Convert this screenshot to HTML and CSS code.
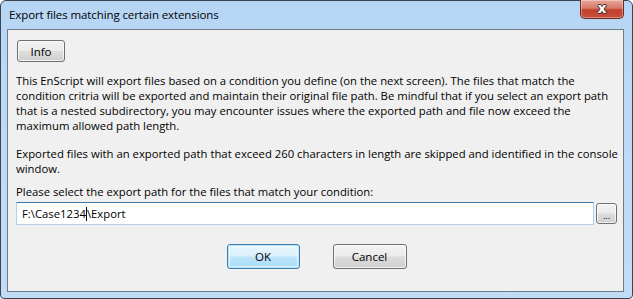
FILE: index.html
```html
<!DOCTYPE html>
<html lang="en">
  <head>
    <meta charset="UTF-8" />
    <title>Export files matching certain extensions</title>
    <link rel="stylesheet" href="styles.css">
  </head>
  <body>
    <div class="window">
      <div class="title-bar">
        <span class="title-text">Export files matching certain extensions</span>
        <div class="close-button"><span>x</span></div>
      </div>
      <div class="client">
        <button class="win-button info-button">Info</button>
        <p class="message">This EnScript will export files based on a condition you define (on the next screen). The files that match the<br>condition critria will be exported and maintain their original file path. Be mindful that if you select an export path<br>that is a nested subdirectory, you may encounter issues where the exported path and file now exceed the<br>maximum allowed path length.</p>
        <p class="message">Exported files with an exported path that exceed 260 characters in length are skipped and identified in the console<br>window.</p>
        <div class="path-label">Please select the export path for the files that match your condition:</div>
        <div class="path-row">
          <div class="path-box">F:\Case1234<span class="caret"></span>\Export</div>
          <button class="win-button browse-button">...</button>
        </div>
        <div class="dialog-buttons">
          <button class="win-button ok-button">OK</button>
          <button class="win-button cancel-button">Cancel</button>
        </div>
      </div>
    </div>
  </body>
</html>
```

FILE: styles.css
```css
body {
  margin: 0;
  background: #ffffff;
  font-family: "Open Sans", "Noto Sans", sans-serif;
  font-size: 11.3px;
  color: #000;
}

.window {
  box-sizing: border-box;
  width: 633px;
  height: 299px;
  border: 1px solid #3b4552;
  border-radius: 6px 6px 4px 4px;
  padding: 0 8px 6px 6px;
  background: linear-gradient(180deg, #b6d5f4 0%, #bcd9f6 30%, #c2dcf5 100%);
  display: flex;
  flex-direction: column;
}

.title-bar {
  height: 28px;
  display: flex;
  align-items: flex-start;
  justify-content: space-between;
}

.title-text {
  margin: 6px 0 0 2px;
  font-size: 11.5px;
  letter-spacing: -0.1px;
  color: #000;
}

.close-button {
  box-sizing: border-box;
  width: 44px;
  height: 19px;
  margin-top: -1px;
  border: 1px solid #6b2a22;
  border-top: none;
  border-radius: 0 0 5px 5px;
  background: linear-gradient(180deg, #e8a69a 0%, #d77a69 45%, #c1402c 55%, #c8503a 100%);
  box-shadow: inset 0 0 0 1px rgba(255, 255, 255, 0.35);
  display: flex;
  align-items: center;
  justify-content: center;
}

.close-button span {
  font-family: "DejaVu Sans", sans-serif;
  font-weight: bold;
  font-size: 14px;
  line-height: 1;
  margin-top: -2px;
  color: #fff;
  text-shadow:
    1px 0 0 #4a2a2a,
    -1px 0 0 #4a2a2a,
    0 1px 0 #4a2a2a,
    0 -1px 0 #4a2a2a;
}

.client {
  flex: 1;
  border: 1px solid #6f7d8b;
  background: #f0f0f0;
  padding: 10px 6px 0 8px;
  display: flex;
  flex-direction: column;
  align-items: flex-start;
}

.win-button {
  box-sizing: border-box;
  padding: 0;
  border: 1px solid #707070;
  border-radius: 3px;
  background: linear-gradient(180deg, #f2f2f2 0%, #ebebeb 48%, #dddddd 52%, #cfcfcf 100%);
  box-shadow: inset 0 0 0 1px rgba(255, 255, 255, 0.7);
  font-family: inherit;
  font-size: 11.5px;
  color: #000;
}

.info-button {
  width: 48px;
  height: 22px;
  margin-left: 1px;
}

.message {
  margin: 11px 0 0;
  line-height: 15px;
  white-space: nowrap;
}

.message + .message {
  margin-top: 13px;
}

.path-label {
  margin-top: 8px;
  line-height: 15px;
}

.path-row {
  margin-top: 3px;
  width: 100%;
  display: flex;
  align-items: center;
  gap: 2px;
}

.path-box {
  box-sizing: border-box;
  width: 579px;
  height: 23px;
  border: 1px solid #b4cfe7;
  border-top-color: #3d7bad;
  background: #fff;
  padding-left: 5px;
  line-height: 21px;
}

.caret {
  display: inline-block;
  width: 1px;
  height: 14px;
  background: #000;
  vertical-align: -3px;
}

.browse-button {
  width: 21px;
  height: 21px;
  font-size: 9px;
  line-height: 1;
  padding-top: 3px;
}

.dialog-buttons {
  margin-top: 19px;
  width: 100%;
  display: flex;
  justify-content: center;
  gap: 33px;
}

.ok-button {
  width: 73px;
  height: 25px;
  border-color: #3c7fb1;
  background: linear-gradient(180deg, #eaf6fd 0%, #d9f0fc 48%, #bee6fd 52%, #a7d9f5 100%);
  box-shadow: inset 0 0 0 1px #b6e0f7, inset 0 0 0 2px rgba(255, 255, 255, 0.6);
}

.cancel-button {
  width: 74px;
  height: 25px;
}
```
